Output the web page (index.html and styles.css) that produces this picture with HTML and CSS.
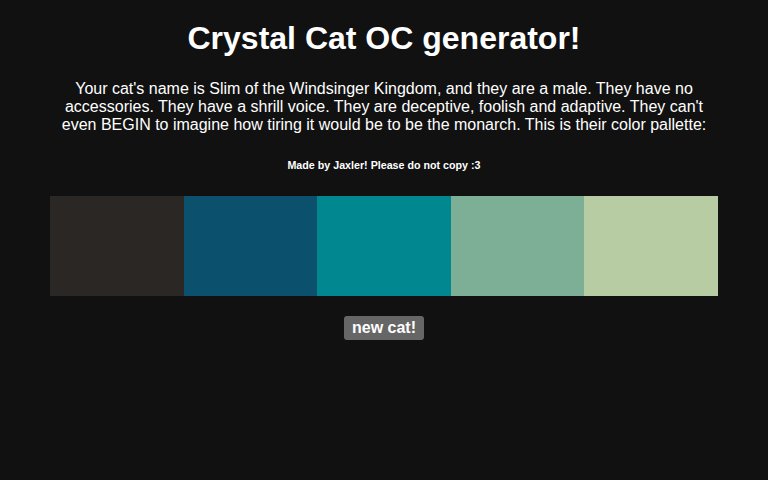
FILE: index.html
```html
<!DOCTYPE html>
<html lang="en">
<head>
    <meta charset="UTF-8">
    <meta name="viewport" content="width=device-width, initial-scale=1.0">
    <title>Crystal Cat OC generator!</title>
    <link rel="stylesheet" href="styles.css">
</head>
<body>
    <div class="container">
        <h1>Crystal Cat OC generator!</h1>
        <p id="description">Your cat's name is Slim of the Windsinger Kingdom, and they are a male. They have no accessories. They have a shrill voice. They are deceptive, foolish and adaptive. They can't even BEGIN to imagine how tiring it would be to be the monarch. This is their color pallette:</p>
        <h6>Made by Jaxler! Please do not copy :3</h6>

        <div class="palette">
            <div class="swatch c1"></div>
            <div class="swatch c2"></div>
            <div class="swatch c3"></div>
            <div class="swatch c4"></div>
            <div class="swatch c5"></div>
        </div>

        <button>new cat!</button>
    </div>
</body>
</html>
```

FILE: styles.css
```css
body {
    margin: 0;
    background-color: #111111;
    color: #ffffff;
    font-family: "Liberation Sans", Arial, sans-serif;
    text-align: center;
}

.container {
    padding: 1px 50px;
}

h1 {
    font-size: 32px;
    margin: 19px 0 23px;
}

p {
    font-size: 16px;
    line-height: 18px;
    margin: 23px 0 21px;
}

h6 {
    font-size: 10.7px;
    margin: 25px 0;
}

.palette {
    display: flex;
    height: 100px;
}

.swatch {
    flex: 1;
}

.c1 { background: #2b2725; }
.c2 { background: #0b506c; }
.c3 { background: #01878f; }
.c4 { background: #7caf95; }
.c5 { background: #b8cca3; }

button {
    margin-top: 20px;
    padding: 3px 8px;
    font-family: "Liberation Sans", Arial, sans-serif;
    font-size: 16px;
    font-weight: bold;
    color: #ffffff;
    background-color: #666666;
    border: none;
    border-radius: 3px;
    cursor: pointer;
}
```
